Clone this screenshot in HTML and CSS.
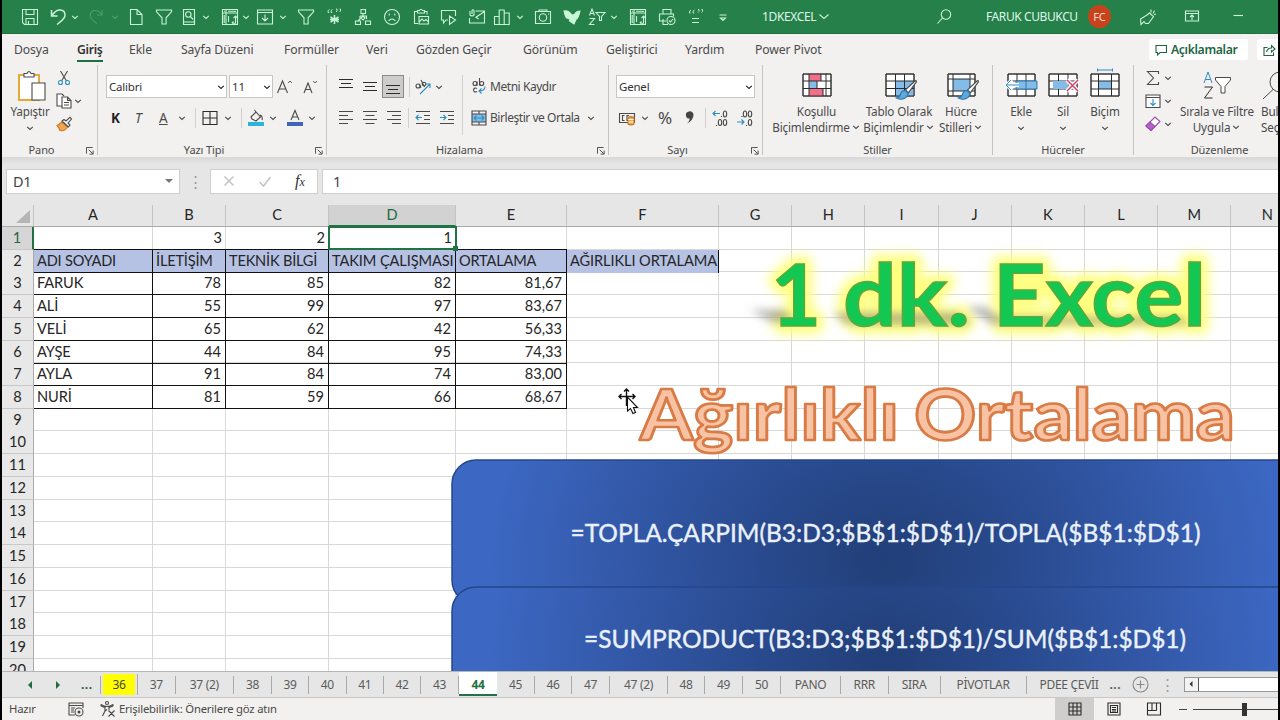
FILE: index.html
```html
<!DOCTYPE html>
<html lang="tr">
<head>
<meta charset="utf-8">
<title>1DKEXCEL</title>
<link rel="stylesheet" href="styles.css">
</head>
<body>
<svg class="defs" aria-hidden="true">
  <symbol id="chev" viewBox="0 0 10 10"><path d="M2.2 3.8 5 6.4 7.8 3.8"/></symbol>
  <symbol id="funnel" viewBox="0 0 20 20"><path d="M2.5 3h15v1.8l-5.4 6V17H8v-6.200L2.500 4.800z"/></symbol>
  <symbol id="pivot" viewBox="0 0 20 20"><path d="M2.500 2.500h15v15h-15zM2.500 6h15M6 2.500v15M4 4.200h1M8 4.200h8M4.200 8v8M8.500 9v6M12 16.200h3.500V9M13.500 11l2-2 2 2M13.500 14.500l-1.700 1.700"/></symbol>
  <symbol id="launch" viewBox="0 0 9 9"><path d="M.5 7.500V.5H7.500M3 3l4.500 4.500M8 4v4H4"/></symbol>
  <symbol id="brush" viewBox="0 0 20 20"><path class="w" d="M18.500 1.500 10 9.500l2.500 2.500 7-9.500q0-1.500-1-1z"/><path class="bl" d="M9.500 10q-3 0-4 3.500-.8 2.500-3.500 3 5 2.500 8.500-.5 2-2 1.500-4z"/></symbol>
</svg>
<div class="app">
  <header class="titlebar">
    <svg class="i"><path d="M2.500 2.500h15v15H4.500l-2-2zM6 2.500v5h8v-5M6 17.500v-6h8v6M8.500 14v3"/></svg>
    <svg class="i"><path class="thick" d="M2.500 3v6H8.500M3 8.500Q7 2.500 11.500 3q5 .7 4.500 6-.7 3-8 8.500"/></svg>
    <svg class="c"><use href="#chev"/></svg>
    <svg class="i faint"><path d="M16 3v5h-5M16 8Q13 3 8 3.500 4 4.500 4.200 9q.7 3 6.500 7.500"/></svg>
    <svg class="c faint"><use href="#chev"/></svg>
    <svg class="i"><path d="M4.500 2.500H11l5 5v10H4.500zM11 2.500v5h5"/></svg>
    <svg class="i"><use href="#funnel"/></svg>
    <svg class="i"><path d="M4.500 2.500h11v15h-11zM4.500 15h11"/><circle cx="9.300" cy="7.500" r="2.700"/><path d="m11.300 9.500 3 3"/></svg>
    <svg class="c"><use href="#chev"/></svg>
    <svg class="i"><use href="#pivot"/></svg>
    <svg class="c"><use href="#chev"/></svg>
    <svg class="i"><path d="M2.500 3h15v14h-15zM2.500 5.500h15M10 7.500V14M7 11l3 3 3-3"/></svg>
    <svg class="c"><use href="#chev"/></svg>
    <svg class="i"><use href="#funnel"/></svg>
    <svg class="i"><path class="fine" d="M5.500 2.500q-2 .5-1.500 3h1.200M8.500 2.500q-2 .5-1.500 3h1.200M12 5q1.500-.5 1-3h-1M15.500 5q1.500-.5 1-3h-1"/><path class="thick" d="M10.500 8v9M6.500 10l8 5M14.500 10l-8 5M6 12.500h9"/></svg>
    <svg class="i"><path d="M8 2.500h4.500v4H8zM10 6.500v2.500M7 9h6.500v3M7 9v3L4.500 14.500M2.500 14h5v3.500h-5zM12.500 14h5v3.500h-5zM10 9l2 2-2 2-2-2z"/></svg>
    <svg class="i"><circle cx="10" cy="10" r="7.500"/><path d="M6.500 14q3.500-4 7 0M7.200 6.500v2M12.800 6.500v2"/></svg>
    <svg class="i"><path d="M7 16.500H3.500v-12H6M14 4.500h2v3M6.500 6V3.500h2q1.500-2.500 3 0h2V6zM8 9.500h9.500V17H8zM8 15l3-3 2 2 2-1.500 2 2"/></svg>
    <svg class="i"><path d="M9 13H7l-2.500 3v-3h-2V3.500h14V9M10.500 9l6 4-6 4.500z"/></svg>
    <svg class="i"><path d="M8.500 4h9v12h-15V11M8.500 10.500l9-6M9 10l2.500 2M3 4v4q2 2 4 0V3.500Q6 2 5 3.500V7"/></svg>
    <svg class="i"><path d="M2.500 9.500h4.700v8H2.500zM7.200 3h5v14.500h-5zM12.200 6h5v11.500h-5z"/></svg>
    <svg class="c"><use href="#chev"/></svg>
    <svg class="i"><path d="M2.500 4.500h15v12h-15zM6 4.500V3h8v1.500"/><circle cx="10" cy="10.500" r="3.700"/><path d="M15 7h1"/></svg>
    <svg class="i solid"><path d="M10 8Q6 3 2 4l1.500 5.500Q4.500 12 8 11.500L7.500 14l4.500 3 2-4.500q2.500-1 4-8.500-4 0-5.500 3.500z"/></svg>
    <svg class="i"><path d="M2.500 8.500 5 2l2.500 6.500M3.500 6.500h3M2.500 11.500h5l-5 6h5M9 5.500h9l-3.500 4v4h-2v-4z"/></svg>
    <svg class="c"><use href="#chev"/></svg>
    <svg class="i"><use href="#pivot"/></svg>
    <svg class="i"><path d="M6 7V2.500h8V7M9 14H2.500V7h14v2.500M6 12v5.500h5"/><circle cx="14" cy="13.500" r="4"/><path d="m12 13.500 1.500 1.500 2.500-3"/></svg>
    <svg class="i"><path class="fine" d="M5 3q-2 .5-1.500 3h1.200M8.500 3q-2 .5-1.500 3h1.200M12 5.500q1.500-.5 1-3h-1M15.500 5.500q1.500-.5 1-3h-1"/><path d="M6 11.500h7M6 15.500h7"/></svg>
    <svg class="i"><path d="M6.500 8h7M7.500 11l2.500 2.500 2.500-2.500z"/></svg>
    <span class="doc">1DKEXCEL</span>
    <svg class="c big"><path d="m2.500 4.500 4.500 4 4.500-4"/></svg>
    <svg class="i"><circle cx="12" cy="7.500" r="4.700"/><path d="M8.500 11 3.500 16.500"/></svg>
    <span class="user">FARUK CUBUKCU</span>
    <span class="avatar">FC</span>
    <svg class="i"><path d="m11.500 6 4 3.500-5 7h-3L6 14.500 3 17.500 2.500 12 9 8zM11.500 6 9 8M13 2.500v3M16.500 3.500l-1.500 3M18 7l-2 .7"/></svg>
    <svg class="i"><path d="M3.500 4h13v10h-13zM3.500 6.500h13M10 13V8M8 10l2-2 2 2"/></svg>
    <svg class="i"><path d="M5.500 8.500h9.500"/></svg>
  </header>

  <nav class="tabs">
    <span>Dosya</span><span class="on">Giriş</span><span>Ekle</span><span>Sayfa Düzeni</span><span>Formüller</span><span>Veri</span><span>Gözden Geçir</span><span>Görünüm</span><span>Geliştirici</span><span>Yardım</span><span>Power Pivot</span>
    <span class="btn"><svg class="s12"><path d="M1 1.500h10.500v7H5L2.500 11V8.500H1z"/></svg>Açıklamalar</span>
    <span class="btn share"><svg class="s12"><path d="M4.500 3.500H1v8h9.500v-3M3.500 8q1-4 5-4V1.500L12 5 8.500 8V6"/></svg></span>
  </nav>

  <section class="ribbon">
    <div class="group pano">
      <div class="body">
        <div class="big">
          <svg class="g paste" viewBox="0 0 30 32"><path class="or" d="M2 5h20v25H2z"/><path class="w" d="M7 7V3.500h3q2-4 4 0h3V7z"/><path class="w" d="M15 13h13v17H15z"/></svg>
          <span>Yapıştır</span><svg class="c"><use href="#chev"/></svg>
        </div>
        <div class="stack">
          <svg class="g s16" viewBox="0 0 16 16"><path d="m4.500 1 6 10M11.500 1 5.500 11"/><circle class="tl" cx="4.500" cy="12.500" r="2"/><circle class="tl" cx="11.500" cy="12.500" r="2"/></svg>
          <div class="pair"><svg class="g s16" viewBox="0 0 16 16"><path class="w" d="M6 13H1V1h5l2 2"/><path class="w" d="M6 4h5.500l3.500 3.500V15H6zM11.500 4v3.500H15M8 9.500h5M8 12h5"/></svg><svg class="c"><use href="#chev"/></svg></div>
          <svg class="g s16" viewBox="0 0 16 16"><path class="fo" d="M6 6 1 9.500q2 2 3 5 4 1 6-1.500l1.500-2z"/><path class="w" d="m6 5 6.500 6 1.500-2-2-2 3.500-4-1.500-1.700L10 5 8 3.500z"/></svg>
        </div>
      </div>
      <div class="cap">Pano<svg class="la"><use href="#launch"/></svg></div>
    </div>

    <div class="group font">
      <div class="row r1">
        <span class="combo">Calibri<svg class="c"><use href="#chev"/></svg></span>
        <span class="combo sz">11<svg class="c"><use href="#chev"/></svg></span>
        <svg class="g s16" viewBox="0 0 16 16"><path d="M.5 14 5.500 2l5 12M2.300 10h6.400"/><path class="fine" d="m11 4 2-2 2 2"/></svg>
        <svg class="g s16" viewBox="0 0 16 16"><path d="M0 14 4 4l4 10M1.500 10.500h5"/><path class="fine" d="m9 2 2 2 2-2"/></svg>
      </div>
      <div class="row r2">
        <b class="k">K</b><i class="t">T</i><u class="u">A</u><svg class="c"><use href="#chev"/></svg><hr>
        <svg class="g s16" viewBox="0 0 16 16"><path class="bk" d="M1 1.500h14v13H1zM8 1.500v13M1 8h14"/></svg><svg class="c"><use href="#chev"/></svg><hr>
        <svg class="g s16" viewBox="0 0 16 16"><path d="M3 7l5-5 4.500 5L8 11 4 9zM8 2 6.500 0M12 5q3 1 2 5"/><path class="cy" d="M0 12h16v4H0z"/></svg><svg class="c"><use href="#chev"/></svg>
        <svg class="g s16" viewBox="0 0 16 16"><path d="M4 10 8 .5 12 10M5.500 7h5"/><path class="nv" d="M0 12h16v4H0z"/></svg><svg class="c"><use href="#chev"/></svg>
      </div>
      <div class="cap">Yazı Tipi<svg class="la"><use href="#launch"/></svg></div>
    </div>

    <div class="group align">
      <div class="body al">
        <div class="rows">
          <div class="row r1">
            <svg class="g s16" viewBox="0 0 16 16"><path class="bk" d="M1 .5h14M3 4.500h10M1 8.500h14"/></svg>
            <svg class="g s16" viewBox="0 0 16 16"><path class="bk" d="M1 3.500h14M3 7.500h10M1 11.500h14"/></svg>
            <span class="sel"><svg class="g s16" viewBox="0 0 16 16"><path class="bk" d="M1 6.500h14M3 10.500h10M1 14.500h14"/></svg></span><hr>
            <svg class="g s16" viewBox="0 0 16 16"><circle cx="3" cy="7" r="2"/><path d="M4.500 5 6 9M6 1l3.500 7"/><circle cx="9" cy="5" r="1.800"/><path class="tl" d="M5 15 15 5M11 5h4v4"/></svg><svg class="c"><use href="#chev"/></svg>
          </div>
          <div class="row r2">
            <svg class="g s16" viewBox="0 0 16 16"><path d="M1 1.500h14M1 5.500h9M1 9.500h14M1 13.500h9"/></svg>
            <svg class="g s16" viewBox="0 0 16 16"><path d="M1 1.500h14M3.500 5.500h9M1 9.500h14M3.500 13.500h9"/></svg>
            <svg class="g s16" viewBox="0 0 16 16"><path d="M1 1.500h14M6 5.500h9M1 9.500h14M6 13.500h9"/></svg><hr>
            <svg class="g s16" viewBox="0 0 16 16"><path d="M1 1.500h14M9 5.500h6M9 9.500h6M1 13.500h14"/><path class="tl" d="M7 7.500H1M3.500 5 1 7.500 3.500 10"/></svg>
            <svg class="g s16" viewBox="0 0 16 16"><path d="M1 1.500h14M9 5.500h6M9 9.500h6M1 13.500h14"/><path class="tl" d="M1 7.500h6M4.500 5 7 7.500 4.500 10"/></svg>
          </div>
        </div>
        <div class="rows wrapcol">
          <div class="row"><svg class="g s16 wrapi" viewBox="0 0 16 16"><circle cx="4" cy="4.500" r="2"/><path d="M6 2.500v4.200M8.500-1v7.500"/><circle cx="10.700" cy="4.500" r="2"/><path d="M6 9.500q-3-1.500-3.500 1.500.5 3 3.500 1.500"/><path class="tl" d="M14 7.500q0 4.500-6 4.500M10.500 9.500 8 12l2.500 2.500"/></svg><span class="wt">Metni Kaydır</span></div>
          <div class="row"><svg class="g s16" viewBox="0 0 16 16"><path class="lb" d="M1 4h14v8H1z"/><path d="M1 1h14v14H1zM1 4h14M1 12h14M8 1v3M8 12v3"/><path class="tl" d="M3 8h10M5.500 5.500 3 8l2.500 2.500M10.500 5.500 13 8l-2.500 2.500"/></svg><span class="mt">Birleştir ve Ortala</span><svg class="c"><use href="#chev"/></svg></div>
        </div>
      </div>
      <div class="cap">Hizalama<svg class="la"><use href="#launch"/></svg></div>
    </div>

    <div class="group num">
      <div class="row"><span class="combo">Genel<svg class="c"><use href="#chev"/></svg></span></div>
      <div class="row r2">
        <svg class="g s16" viewBox="0 0 16 16"><path d="M.5 3.500h15v9H.5zM5.500 5.500h-2v5h2M10 5.500H8v5h1"/><path class="fo" d="M9 7.500q3-1.800 6 0V14q-3 1.800-6 0z"/><path class="ow" d="M9.500 9.500h5M9.500 12h5"/></svg><svg class="c"><use href="#chev"/></svg>
        <span class="pct">%</span>
        <svg class="g s16" viewBox="0 0 16 16"><path class="dk" d="M7 1.500a3.300 3.300 0 0 1 4.500 3.200Q11.500 10 5 13.500q2.700-2.500 2.800-5A3.500 3.500 0 0 1 7 1.500z"/></svg><hr>
        <svg class="g s16" viewBox="0 0 16 16"><path class="tl" d="M8 3.500H1M3.500 1 1 3.500 3.500 6"/><path d="M9.500 6v1"/><ellipse cx="13" cy="4" rx="1.700" ry="3"/><ellipse cx="8" cy="12.500" rx="1.700" ry="3"/><ellipse cx="13" cy="12.500" rx="1.700" ry="3"/><path d="M4.500 15v1"/></svg>
        <svg class="g s16" viewBox="0 0 16 16"><path class="tl" d="M0 12h7M4.500 9.500 7 12l-2.500 2.500"/><path d="M5 6v1M9.500 15v1"/><ellipse cx="8" cy="4" rx="1.700" ry="3"/><ellipse cx="13" cy="4" rx="1.700" ry="3"/><ellipse cx="13" cy="12.500" rx="1.700" ry="3"/></svg>
      </div>
      <div class="cap">Sayı<svg class="la"><use href="#launch"/></svg></div>
    </div>

    <div class="group styles">
      <div class="body">
        <div class="big"><svg class="g l" viewBox="0 0 32 30"><path class="w" d="M2 3h28v22H2z"/><path class="pk" d="M8 3h12v7H8zM8 17.500h14V25H8z"/><path class="lb" d="M8 10h8v7.500H8z"/><path class="bk" d="M2 3h28v22H2zM2 10h28M2 17.500h28M8 3v22M20 3v7M16 10v7M22 17v8M25 3v22"/></svg><span>Koşullu</span><span>Biçimlendirme<svg class="c"><use href="#chev"/></svg></span></div>
        <div class="big"><svg class="g l" viewBox="0 0 32 30"><path class="w" d="M2 3h28v22H2z"/><path class="lb" d="M11.500 10H30v15H11.500z"/><path class="bk" d="M2 3h28v22H2zM2 10h28M2 17.500h28M11.500 3v22M20.500 3v22"/><use href="#brush" x="10" y="8" width="23" height="23"/></svg><span>Tablo Olarak</span><span>Biçimlendir<svg class="c"><use href="#chev"/></svg></span></div>
        <div class="big"><svg class="g l" viewBox="0 0 32 30"><path class="w" d="M2 3h27v22H2z"/><path class="lb" d="M7 8h17v12H7z"/><path class="bk" d="M2 3h27v22H2zM2 8h27M2 20h27M7 3v22M24 3v22"/><use href="#brush" x="10" y="8" width="23" height="23"/></svg><span>Hücre</span><span>Stilleri<svg class="c"><use href="#chev"/></svg></span></div>
      </div>
      <div class="cap">Stiller</div>
    </div>

    <div class="group cells">
      <div class="body">
        <div class="big"><svg class="g l" viewBox="0 0 32 30"><path class="w" d="M3 3h27v22H3z"/><path class="bk" d="M3 3h27v22H3zM12 3v22M21 3v22M3 10h27M3 18h27"/><path class="lb bs" d="M11 10h21v8H11z"/><path class="bs" d="M21 10v8"/><path class="wa" d="M14 14H2M7 9l-5 5 5 5"/><path class="tl" d="M14 14H1M6 9l-5 5 5 5"/></svg><span>Ekle</span><svg class="c"><use href="#chev"/></svg></div>
        <div class="big"><svg class="g l" viewBox="0 0 32 30"><path class="w" d="M2 3h28v22H2z"/><path class="bk" d="M2 3h28v22H2zM11.500 3v22M21 3v22M2 10h28M2 18h28"/><path class="lb" d="M6 10h15v8H6z"/><path class="wa" d="m20 9 11 11M31 9 20 20"/><path class="rd" d="m20 9 11 11M31 9 20 20"/></svg><span>Sil</span><svg class="c"><use href="#chev"/></svg></div>
        <div class="big"><svg class="g l" viewBox="0 0 32 30"><path class="w" d="M2 3h28v22H2z"/><path class="lb" d="M9.500 10h13v8h-13z"/><path class="bk" d="M2 3h28v22H2zM9.500 3v22M22.500 3v22M2 10h28M2 18h28"/><path class="tl" d="M8.500-1h15M8.500-2.500v3M23.500-2.500v3"/></svg><span>Biçim</span><svg class="c"><use href="#chev"/></svg></div>
      </div>
      <div class="cap">Hücreler</div>
    </div>

    <div class="group edit">
      <div class="body">
        <div class="stack">
          <div class="pair"><svg class="g s16" viewBox="0 0 16 16"><path d="M12.500 4V1.500H1.500L7.500 8l-6 6.500h11V12"/></svg><svg class="c"><use href="#chev"/></svg></div>
          <div class="pair"><svg class="g s16" viewBox="0 0 16 16"><path class="w" d="M0 2h14v12.500H0zM0 4.500h14"/><path class="tl" d="M7 6v6.500M4.500 10 7 12.500l2.500-2.500"/></svg><svg class="c"><use href="#chev"/></svg></div>
          <div class="pair"><svg class="g s16" viewBox="0 0 16 16"><path class="pw" d="m0 10 9-9 5 4.500-9 9z"/><path class="pu" d="m0 10 4-4 5 4.500-4 4z"/></svg><svg class="c"><use href="#chev"/></svg></div>
        </div>
        <div class="big"><svg class="g l" viewBox="0 0 32 30"><path class="tl" d="M3 12 7 1l4 11M4.500 8.500h5"/><path class="bk" d="M3.500 16h8l-8 11h8"/><path class="w" d="M14.500 6.500h15v2.500l-5.500 6.500V22h-4v-6.500l-5.500-6.500z"/></svg><span>Sırala ve Filtre</span><span>Uygula<svg class="c"><use href="#chev"/></svg></span></div>
        <div class="big find"><svg class="g l" viewBox="0 0 32 30"><circle cx="19" cy="11" r="10"/><path d="M12 18.500 2 28"/></svg><span>Bul</span><span>Seç</span></div>
      </div>
      <div class="cap">Düzenleme</div>
    </div>
  </section>

  <section class="fbar">
    <span class="box name">D1<svg class="c"><path class="gf" d="M1 3h8L5 7z"/></svg></span>
    <span class="dots">⋮</span>
    <span class="box fx"><svg class="s12 x"><path d="m1.500 1.500 9 9M10.500 1.500l-9 9"/></svg><svg class="s12 x"><path d="m.5 7 4 4L11.500 2"/></svg><i>f<small>x</small></i></span>
    <span class="box input">1</span>
  </section>

  <main class="sheet">
    <div class="r head"><span class="corner"><svg class="tri"><path d="M15 0v13H1z"/></svg></span><span>A</span><span>B</span><span>C</span><span class="on">D</span><span>E</span><span>F</span><span>G</span><span>H</span><span>I</span><span>J</span><span>K</span><span>L</span><span>M</span><span>N</span></div>
    <div class="r first"><b class="on">1</b><em></em><em>3</em><em>2</em><em class="active">1</em></div>
    <div class="r title"><b>2</b><span>ADI SOYADI</span><span>İLETİŞİM</span><span>TEKNİK BİLGİ</span><span class="tk">TAKIM ÇALIŞMASI</span><span>ORTALAMA</span><span class="ag">AĞIRLIKLI ORTALAMA</span></div>
    <div class="r data"><b>3</b><span>FARUK</span><em>78</em><em>85</em><em>82</em><em>81,67</em></div>
    <div class="r data"><b>4</b><span>ALİ</span><em>55</em><em>99</em><em>97</em><em>83,67</em></div>
    <div class="r data"><b>5</b><span>VELİ</span><em>65</em><em>62</em><em>42</em><em>56,33</em></div>
    <div class="r data"><b>6</b><span>AYŞE</span><em>44</em><em>84</em><em>95</em><em>74,33</em></div>
    <div class="r data"><b>7</b><span>AYLA</span><em>91</em><em>84</em><em>74</em><em>83,00</em></div>
    <div class="r data"><b>8</b><span>NURİ</span><em>81</em><em>59</em><em>66</em><em>68,67</em></div>
    <div class="r"><b>9</b></div><div class="r"><b>10</b></div><div class="r"><b>11</b></div><div class="r"><b>12</b></div><div class="r"><b>13</b></div><div class="r"><b>14</b></div><div class="r"><b>15</b></div><div class="r"><b>16</b></div><div class="r"><b>17</b></div><div class="r"><b>18</b></div><div class="r"><b>19</b></div><div class="r"><b>20</b></div>

    <svg class="canvas" viewBox="0 205 1276 466">
      <defs>
        <radialGradient id="blue" gradientUnits="userSpaceOnUse" cx="0" cy="0" r="1" gradientTransform="translate(884 560) scale(400 330)">
          <stop offset="0" stop-color="#213f78"/><stop offset=".3" stop-color="#28498c"/><stop offset=".7" stop-color="#345aab"/><stop offset="1" stop-color="#3c68c3"/>
        </radialGradient>
        <radialGradient id="blue2" gradientUnits="userSpaceOnUse" cx="0" cy="0" r="1" gradientTransform="translate(884 655) scale(400 330)">
          <stop offset="0" stop-color="#213f78"/><stop offset=".3" stop-color="#28498c"/><stop offset=".7" stop-color="#345aab"/><stop offset="1" stop-color="#3c68c3"/>
        </radialGradient>
        <filter id="b5" x="-20%" y="-40%" width="140%" height="180%"><feGaussianBlur stdDeviation="5.500"/></filter>
        <filter id="b3" x="-10%" y="-60%" width="120%" height="220%"><feGaussianBlur stdDeviation="4"/></filter>
      </defs>
      <rect class="shape" x="450" y="460" width="868" height="144" rx="24" fill="url(#blue)"/>
      <rect class="shape" x="450" y="587" width="868" height="144" rx="24" fill="url(#blue2)"/>
      <text class="formula" x="568.500" y="542" textLength="630" lengthAdjust="spacingAndGlyphs">=TOPLA.ÇARPIM(B3:D3;$B$1:$D$1)/TOPLA($B$1:$D$1)</text>
      <text class="formula" x="582" y="647.500" textLength="602" lengthAdjust="spacingAndGlyphs">=SUMPRODUCT(B3:D3;$B$1:$D$1)/SUM($B$1:$D$1)</text>
      <g class="glow" filter="url(#b5)" aria-hidden="true">
        <text class="excel" x="769" y="325.500" textLength="50" lengthAdjust="spacingAndGlyphs">1</text>
        <text class="excel" x="841" y="325.500" textLength="127" lengthAdjust="spacingAndGlyphs">dk.</text>
        <text class="excel" x="991" y="325.500" textLength="213" lengthAdjust="spacingAndGlyphs">Excel</text>
      </g>
      <path class="cast" d="M748 310h34l12 12h-24zM830 313h125l16 11H845zM965 307h18l14 10h180l14 7H990z" filter="url(#b3)"/>
      <text class="excel" x="769" y="325.500" textLength="50" lengthAdjust="spacingAndGlyphs">1</text>
      <text class="excel" x="841" y="325.500" textLength="127" lengthAdjust="spacingAndGlyphs">dk.</text>
      <text class="excel" x="991" y="325.500" textLength="213" lengthAdjust="spacingAndGlyphs">Excel</text>
      <text class="agir" x="638" y="439.500" textLength="259" lengthAdjust="spacingAndGlyphs">Ağırlıklı</text>
      <text class="agir" x="912" y="439.500" textLength="321" lengthAdjust="spacingAndGlyphs">Ortalama</text>
      <g class="cursor"><path class="arrows" d="M624.500 389v17M617 396.500h16M622 391.500l2.500-2.500 2.500 2.500M619.500 394l-2.500 2.500 2.500 2.500M630.500 394l2.500 2.500-2.500 2.500"/><path class="ptr" d="M625.500 397v14l3-2.500 2.500 5 2.500-1-2-5h4z"/></g>
    </svg>
  </main>

  <nav class="sheets">
    <span class="nav"><svg class="c"><path d="M7 1v8L3 5z"/></svg><svg class="c"><path d="M3 1v8l4-4z"/></svg><b>...</b></span>
    <span class="yel"><i>36</i></span><span>37</span><span>37 (2)</span><span>38</span><span>39</span><span>40</span><span>41</span><span>42</span><span>43</span><span class="on">44</span><span>45</span><span>46</span><span>47</span><span>47 (2)</span><span>48</span><span>49</span><span>50</span><span>PANO</span><span>RRR</span><span>SIRA</span><span>PİVOTLAR</span>
    <span class="last">PDEE ÇEVİI</span><b class="more">...</b>
    <svg class="add"><circle cx="8.500" cy="8.500" r="7.500"/><path d="M8.500 4.500v8M4.500 8.500h8"/></svg>
    <span class="dots">⋮</span>
    <span class="scroll"><i><svg class="c"><path d="M6.500 2v6L3.500 5z"/></svg></i></span>
  </nav>

  <footer class="status">
    <span>Hazır</span>
    <svg class="g s16" viewBox="0 0 16 16"><path d="M7 14H1V2h14v5M1 4.500h14M3 7h4M3 9h3M3 11h3"/><circle cx="11" cy="11" r="4"/><circle class="dk" cx="11" cy="11" r="1.500"/></svg>
    <svg class="g s16" viewBox="0 0 16 16"><circle cx="7" cy="2" r="1.500"/><path d="M1 3.500q-.5 1.500 1 2l3 1V10l-2.500 5M13 3.500q.5 1.500-1 2l-3 1V9M7 5.500q-3 0-6-2M7 5.500q3 0 6-2M5 10l2-1.500M8.500 9.500l6 6M14.500 9.500l-6 6"/></svg>
    <span class="acc">Erişilebilirlik: Önerilere göz atın</span>
    <span class="view"><svg class="g s16" viewBox="0 0 16 16"><path class="bk" d="M2 2h12v12H2zM2 6h12M2 10h12M6 2v12M10 2v12"/></svg></span>
    <svg class="g s16 v2" viewBox="0 0 16 16"><path class="bk" d="M2 2h12v12H2zM4.500 4.500h7v7h-7zM6 6.500h4M6 8.500h4M6 10h4"/></svg>
    <svg class="g s16 v3" viewBox="0 0 16 16"><path class="bk" d="M1.500 2h13v12h-13zM1.500 9.500h9M6 2v7.500M10.500 2v7.500"/></svg>
    <span class="minus"></span>
    <span class="slider"><i></i></span>
  </footer>
</div>
</body>
</html>
```
FILE: styles.css
```css
* { box-sizing: border-box; }
body { margin: 0; background: #000; width: 1280px; height: 720px; overflow: hidden; font: 12px/16px "Noto Sans", "Open Sans", sans-serif; color: #4a4a4a; }
.defs { display: none; }
.app { margin: 0 2px; height: 720px; display: flex; flex-direction: column; overflow: hidden; background: #f2f1ef; }
svg { display: block; fill: none; stroke: currentColor; stroke-width: 1.1; overflow: visible; flex: none; }
.i { width: 20px; height: 20px; }
.c { width: 10px; height: 10px; }
.s12 { width: 12px; height: 12px; }
.s16 { width: 16px; height: 16px; }
.g { color: #4a4a4a; }
.thick { stroke-width: 1.5; }
.fine { stroke-width: .9; }
i, em { font-style: normal; }
hr { width: 1px; height: 20px; border: 0; margin: 0; background: #d2d0ce; }

/* title bar */
.titlebar { height: 34px; flex: none; padding-left: 18px; background: #26804a; color: #c9f3d7; border-bottom: 1px solid #1f7442; display: grid; align-items: center; white-space: nowrap; overflow: hidden;
  grid-template-columns: 29px 21px 16px 24px 16px 28px 25px 22px 19px 21px 14px 23px 18px 28px 29px 29px 29px 28px 28px 25px 23px 18px 29px 25px 22px 19px 29px 29px 27px 49px 55px 117px 52px 102px 50px 44px 46px 1fr; }
.faint { opacity: .25; }
.solid { fill: #c9f5d8; }
.titlebar .big { width: 14px; height: 14px; }
.doc { letter-spacing: -.35px; color: #dff7e8; }
.user { letter-spacing: -.4px; color: #dff7e8; }
.avatar { width: 23px; height: 23px; border-radius: 50%; background: #c8431b; color: #f8dccb; text-align: center; font-size: 11px; line-height: 23px; }

/* ribbon tabs */
.tabs { height: 31px; flex: none; padding-left: 12px; display: grid; align-items: center; white-space: nowrap; font-size: 12.200px;
  grid-template-columns: 63px 52px 52px 103px 82px 50px 107px 83px 79px 70px 394px 108px 1fr; }
.tabs span { justify-self: start; letter-spacing: -.1px; line-height: 15px; padding-bottom: 1px; }
.tabs .on { font-weight: 600; color: #333; box-shadow: 0 2px #f2f1ef, 0 4px #1e6e42; letter-spacing: -.3px; }
.tabs .btn { display: flex; align-items: center; gap: 4px; height: 21px; background: #fff; border-radius: 2px; padding: 0 9px 0 6px; width: 99px; color: #21643f; font-weight: 600; letter-spacing: -.35px; }
.tabs .share { width: 30px; }

/* ribbon */
.ribbon { height: 93px; flex: none; display: flex; border-bottom: 1px solid #dadada; }
.group { position: relative; display: flex; flex-direction: column; padding-top: 10px; border-right: 1px solid #c4c4c4; height: 90px; flex: none; white-space: nowrap; }
.body { display: flex; height: 65px; }
.row { display: grid; align-items: center; height: 23px; margin-bottom: 8px; }
.cap { display: flex; justify-content: center; align-items: center; margin-top: auto; height: 16px; margin-bottom: -3px; font-size: 11px; letter-spacing: -.1px; padding-right: 16px; }
.la { position: absolute; right: 3px; bottom: 0; width: 8px; height: 8px; }
.big { display: flex; flex-direction: column; align-items: center; line-height: 15.500px; font-size: 11.700px; letter-spacing: -.15px; }
.big span { display: flex; align-items: center; }
.big span .c { margin-left: 1px; }
.big > .c { margin-top: 3px; }
.l { width: 32px; height: 30px; margin: -4px 0 3px; stroke-width: 1; }
.stack { display: flex; flex-direction: column; gap: 7px; margin-top: -5px; }
.pair { display: flex; align-items: center; gap: 1px; }
.combo { display: flex; align-items: center; justify-content: space-between; height: 23px; background: #fff; border: 1px solid #c8c6c4; padding: 0 0 0 2px; color: #333; font-size: 11.500px; letter-spacing: -.2px; }
.combo .c { stroke: #222; }
.w { fill: #fff; } .bk { stroke: #2c2c2c; } .tl { stroke: #2b8fc0; } .or { stroke: #e5a93b; stroke-width: 2; fill: #fff; }
.bl { fill: #5fa8dc; stroke: #2e75b0; } .lb { fill: #83bce8; stroke: none; } .bs { stroke: #2b78b0; } .pk { fill: #f0708a; stroke: none; }
.fo { fill: #f0a64c; stroke: #c9772a; } .ow { stroke: #fff; } .cy { fill: #28b4dc; stroke: none; } .nv { fill: #4264b8; stroke: none; }
.dk { fill: #444; stroke: none; } .wa { stroke: #fff; stroke-width: 4; } .rd { stroke: #d8406a; stroke-width: 1.500; } .pw { fill: #fff; stroke: #9b4bad; } .pu { fill: #b565c6; stroke: #9b4bad; }

.pano { width: 96px; }
.pano .body { padding-left: 7px; }
.pano .big { width: 42px; }
.paste { width: 30px; height: 32px; margin: -5px 0 2px; position: relative; left: 2px; }
.pano .stack { padding-left: 5px; }
.font { width: 229px; }
.font .r1 { grid-template-columns: 123px 48px 27px 1fr; padding-left: 8px; }
.font .combo { width: 121px; }
.font .sz { width: 44px; }
.font .r2 { padding-left: 13px; grid-template-columns: 24px 24px 18px 18px 7px 21px 18px 7px 20px 19px 20px 1fr; font-size: 13.500px; }
.k { color: #222; } .t { font-style: italic; }
.align { width: 282px; }
.align .rows { width: 136px; border-right: 1px solid #d2d0ce; height: 60px; }
.align .r1 { grid-template-columns: 24px 20px 27px 6px 19px 1fr; padding-left: 11px; }
.align .r2 { grid-template-columns: 24px 24px 22px 7px 24px 1fr; padding-left: 11px; }
.sel { width: 22px; height: 23px; background: #cdcccb; border: 1px solid #8a8a8a; display: flex; justify-content: center; align-items: center; }
.align .wrapcol { border: 0; width: 140px; }
.wrapcol .row { grid-template-columns: 19px 96px 1fr; padding-left: 8px; }
.wt, .mt { letter-spacing: -.45px; }
.num { width: 154px; }
.num .row { padding-left: 7px; padding-right: 7px; }
.num .r2 { padding-left: 10px; grid-template-columns: 21px 18px 24px 23px 7px 25px 1fr; }
.pct { font-size: 17px; }
.styles { width: 230px; }
.styles .body { padding-left: 10px; }
.styles .big { width: 87px; } .styles .big + .big { width: 78px; } .styles .big + .big + .big { width: 46px; }
.styles .big + .big .l { margin-left: 2px; }
.cells { width: 141px; }
.cells .body { padding-left: 7px; }
.cells .big { width: 42px; }
.styles .cap, .cells .cap { padding-right: 0; }
.edit { width: 173px; border: 0; }
.edit .stack { padding-left: 12px; width: 43px; }
.edit .big { width: 80px; }
.edit .find { width: 50px; align-items: flex-start; padding-left: 4px; }
.edit .cap { padding-right: 2px; }

/* formula bar */
.fbar { height: 47px; flex: none; background: linear-gradient(#d9d9d9, #e6e6e6 6px); display: grid; grid-template-columns: 174px 30px 108px 4px 1fr; padding: 11px 0 0 4px; align-items: start; }
.box { height: 25px; background: #fff; border: 1px solid #cfcfcf; display: flex; align-items: center; font-size: 14.500px; line-height: 20px; padding-bottom: 1px; color: #444; }
.name { justify-content: space-between; padding: 0 5px 1px 6px; letter-spacing: -.3px; }
.gf { fill: #777; stroke: none; }
.dots { text-align: center; line-height: 24px; color: #999; font-size: 15px; }
.fx { padding-left: 12px; gap: 24px; }
.fx .x { color: #c4c4c4; stroke-width: 1.500; }
.fx i { font: italic 16px/20px "Liberation Serif", serif; color: #333; }
.fx small { font-size: 12px; }
.input { grid-column: 5; padding-left: 10px; border-right: 0; }

/* worksheet */
.sheet { position: relative; height: 466px; flex: none; overflow: hidden; font: 14.600px/22px Lato, "Liberation Sans", sans-serif; color: #262626;
  --v: linear-gradient(#d8d8d8, #d8d8d8); background-color: #fff;
  background-image: var(--v), var(--v), var(--v), var(--v), var(--v), var(--v), var(--v), var(--v), var(--v), var(--v), var(--v), var(--v), var(--v);
  background-size: 1px 100%; background-repeat: no-repeat;
  background-position: 150px 0, 223px 0, 326px 0, 453px 0, 564px 0, 716px 0, 789px 0, 862px 0, 936px 0, 1009px 0, 1082px 0, 1155px 0, 1228px 0; }
.r { display: grid; grid-template-columns: 32px 119px 73px 103px 127px 111px 152px repeat(8, 73.200px); height: 22.720px; border-bottom: 1px solid #d8d8d8; white-space: nowrap; }
.head { height: 22px; background: #e6e6e6; border-color: #aaa; text-align: center; }
.head span { border-right: 1px solid #c4c4c4; line-height: 20px; }
.head .on { background: #d2d2d2; color: #23683f; border-bottom: 1px solid #217346; }
.corner { display: flex; justify-content: flex-end; align-items: flex-end; padding: 0 2px 3px 0; }
.tri { width: 16px; height: 13px; fill: #b5b5b5; stroke: none; }
.r b { font-weight: 400; background: #e8e8e8; border-right: 1px solid #aaa; text-align: center; margin-bottom: -1px; border-bottom: 1px solid #c8c8c8; }
.r b.on { background: #d6d6d6; color: #23683f; border-right: 2px solid #217346; }
.r em { text-align: right; padding-right: 4px; }
.first .active { position: relative; margin: -1px -1px -1px -1px; border: 2px solid #217346; padding-right: 3px; line-height: 20px; z-index: 1; }
.active::after { content: ""; position: absolute; right: -3px; bottom: -3px; width: 5px; height: 5px; background: #217346; }
.title span { background: #b6c2e4; padding-left: 3px; border-right: 1px solid #111; box-shadow: inset 0 -1px #111, 0 -1px #111; margin-bottom: -1px; letter-spacing: -.2px; line-height: 22px; }
.title .tk { letter-spacing: -.1px; }
.title .ag { box-shadow: none; letter-spacing: -.1px; }
.data span, .data em { border-right: 1px solid #111; box-shadow: inset 0 -1px #111; margin-bottom: -1px; line-height: 22px; }
.data span { padding-left: 3px; letter-spacing: -.1px; }

.canvas { position: absolute; left: 0; top: 0; width: 1276px; height: 466px; z-index: 2; }
.shape { stroke: #24468c; stroke-width: 1.500; }
.formula { font: 25px Lato, sans-serif; fill: #eaf1fb; stroke: #eaf1fb; stroke-width: .4; }
.excel { font: bold 87px Lato, sans-serif; fill: #12c853; stroke: #5aa83e; stroke-width: 1.500; }
.glow .excel { fill: #ffff80; stroke: #ffff80; stroke-width: 16; stroke-linejoin: round; }
.cast { fill: #777; fill-opacity: .55; stroke: none; }
.agir { font: bold 71px Lato, sans-serif; fill: #f8c3a4; stroke: #d97b45; stroke-width: 2.700; stroke-linejoin: round; }
.arrows { stroke: #111; stroke-width: 1.400; }
.ptr { fill: #fff; stroke: #111; }

/* sheet tabs */
.sheets { height: 27px; flex: none; background: #e6e6e6; border-top: 1px solid #b5b5b5; border-bottom: 1px solid #c8c8c8; display: grid; align-items: center; white-space: nowrap; color: #5c5c5c; letter-spacing: -.3px;
  grid-template-columns: 99px 37px 37.500px 58.500px 38px 37px 37.500px 37.500px 37px 38px 38px 38px 37px 38px 58px 37px 38px 38px 60px 47.500px 52px 86px 79px 26px 28px 24px 1fr; }
.sheets > span { text-align: center; border-right: 1px solid #aaa; height: 18px; line-height: 17px; }
.sheets .nav { display: grid; grid-template-columns: 28px 28px 1fr; padding-left: 23px; align-items: center; text-align: left; }
.nav .c { fill: #1c6b41; stroke: none; }
.nav b { color: #245c40; letter-spacing: .5px; }
.sheets .yel { padding: 0 2px; height: 21px; line-height: 21px; color: #444; }
.yel i { display: block; background: #ff0; }
.sheets .on { background: #fff; color: #217346; font-weight: 700; align-self: start; height: 24px; line-height: 26px; border: 0; border-bottom: 2px solid #217346; }
.sheets .last { border: 0; text-align: left; padding-left: 13px; }
.more { padding-left: 4px; letter-spacing: .5px; }
.add { width: 17px; height: 17px; color: #888; }
.sheets .dots { border: 0; line-height: 17px; width: 14px; }
.sheets .scroll { height: 15px; border: 1px solid #999; border-right: 0; background: #fff; }
.scroll i { display: block; width: 14px; height: 13px; border-right: 1px solid #555; background: #f3f3f3; padding: 1px; }
.scroll .c { fill: #333; stroke: none; }

/* status bar */
.status { height: 22px; flex: none; display: grid; align-items: center; padding-left: 7px; white-space: nowrap; font-size: 11.300px; letter-spacing: -.2px;
  grid-template-columns: 59px 32px 19px 936px 51px 40px 33px 14px 1fr; }
.view { width: 39px; height: 22px; background: #cfcecd; display: flex; align-items: center; justify-content: center; }
.minus { width: 8px; height: 1px; background: #444; }
.slider { height: 1px; background: #444; }
.slider i { display: block; position: relative; left: 49px; top: -6px; width: 5px; height: 13px; background: #333; }
```
